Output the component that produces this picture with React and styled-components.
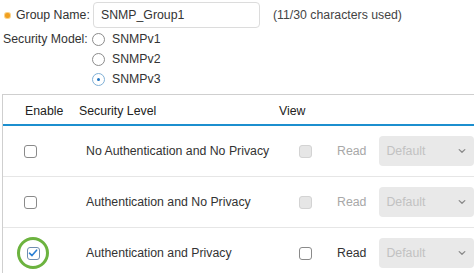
import styled, { createGlobalStyle } from "styled-components";

const GlobalStyle = createGlobalStyle`
  html, body {
    margin: 0;
    padding: 0;
    background: #fff;
    overflow: hidden;
  }
  body {
    font-family: "Liberation Sans", Arial, sans-serif;
    font-size: 12.3px;
    color: #333;
  }
`;

const rows = [
  { level: "No Authentication and No Privacy", enabled: false, viewEnabled: false },
  { level: "Authentication and No Privacy", enabled: false, viewEnabled: false },
  { level: "Authentication and Privacy", enabled: true, viewEnabled: true },
];

function CheckMark() {
  return (
    <svg width="10" height="10" viewBox="0 0 10 10">
      <path d="M1.5 5.2 L4 7.6 L8.6 2.2" fill="none" stroke="#2a7fd4" strokeWidth="1.6" strokeLinecap="round" strokeLinejoin="round" />
    </svg>
  );
}

function Chevron() {
  return (
    <svg width="8" height="6" viewBox="0 0 8 6">
      <path d="M1.2 1.6 L4 4.3 L6.8 1.6" fill="none" stroke="#8a8a8a" strokeWidth="1.3" strokeLinecap="round" strokeLinejoin="round" />
    </svg>
  );
}

export default function App() {
  return (
    <Page>
      <GlobalStyle />
      <FormRow>
        <Label>
          <Required />
          Group Name:
        </Label>
        <TextInput defaultValue="SNMP_Group1" />
        <Hint>(11/30 characters used)</Hint>
      </FormRow>
      <ModelRow>
        <Label>Security Model:</Label>
        <RadioList>
          {["SNMPv1", "SNMPv2", "SNMPv3"].map((m) => (
            <RadioItem key={m}>
              <Radio $checked={m === "SNMPv3"} />
              {m}
            </RadioItem>
          ))}
        </RadioList>
      </ModelRow>

      <Table>
        <HeaderRow>
          <HeadCell $pad={22}>Enable</HeadCell>
          <HeadCell>Security Level</HeadCell>
          <HeadCell>View</HeadCell>
        </HeaderRow>
        {rows.map((r) => (
          <Row key={r.level}>
            <EnableCell>
              {r.enabled ? (
                <Highlight>
                  <Box $checked>
                    <CheckMark />
                  </Box>
                </Highlight>
              ) : (
                <Box />
              )}
            </EnableCell>
            <LevelCell>{r.level}</LevelCell>
            <ViewCell>
              <Box $disabled={!r.viewEnabled} />
              <ReadLabel $disabled={!r.viewEnabled}>Read</ReadLabel>
              <Select>
                Default
                <Chevron />
              </Select>
            </ViewCell>
          </Row>
        ))}
      </Table>
    </Page>
  );
}

const Page = styled.div`
  width: 474px;
  padding-top: 2px;
`;

const FormRow = styled.div`
  display: flex;
  align-items: center;
  height: 26px;
`;

const Label = styled.div`
  width: 90px;
  padding-left: 3px;
  box-sizing: border-box;
  display: flex;
  align-items: center;
  white-space: nowrap;
  color: #333;
`;

const Required = styled.span`
  width: 5px;
  height: 5px;
  border-radius: 2px;
  background: #f0a020;
  box-shadow: 0 0 0 1px #fbd38a;
  margin: 0 6px 0 2px;
`;

const TextInput = styled.input`
  width: 167px;
  height: 26px;
  box-sizing: border-box;
  border: 1px solid #dcdcdc;
  border-radius: 4px;
  padding: 0 7px;
  margin-left: 3px;
  font: inherit;
  color: #333;
  outline: none;
`;

const Hint = styled.span`
  margin-left: 13px;
  color: #444;
`;

const ModelRow = styled.div`
  display: flex;
  align-items: flex-start;
  margin-top: 1px;
  & > ${Label} {
    height: 20px;
  }
`;

const RadioList = styled.div`
  display: flex;
  flex-direction: column;
  margin-left: 2px;
`;

const RadioItem = styled.div`
  display: flex;
  align-items: center;
  height: 20px;
  gap: 7px;
`;

const Radio = styled.span`
  width: 13px;
  height: 13px;
  box-sizing: border-box;
  border-radius: 50%;
  border: 1px solid ${(p) => (p.$checked ? "#7fb0d6" : "#8c8c8c")};
  display: flex;
  align-items: center;
  justify-content: center;
  &::after {
    content: "";
    width: 3px;
    height: 3px;
    border-radius: 50%;
    background: #1f73c0;
    display: ${(p) => (p.$checked ? "block" : "none")};
  }
`;

const Table = styled.div`
  margin-top: 5px;
  margin-left: 2px;
  width: 480px;
  border-top: 1px solid #cfcfcf;
  border-left: 1px solid #cfcfcf;
`;

const columns = "76px 200px 1fr";

const HeaderRow = styled.div`
  display: grid;
  grid-template-columns: ${columns};
  padding: 9px 0 5px;
  border-bottom: 2px solid #1c8fcf;
  line-height: 15px;
  color: #222;
`;

const HeadCell = styled.div`
  padding-left: ${(p) => p.$pad || 0}px;
`;

const Row = styled.div`
  display: grid;
  grid-template-columns: ${columns};
  align-items: center;
  height: 50px;
  border-bottom: 1px solid #e6e6e6;
`;

const EnableCell = styled.div`
  padding-left: 21px;
  display: flex;
  align-items: center;
`;

const Highlight = styled.div`
  width: 26px;
  height: 26px;
  margin-left: -7px;
  border: 3px solid #6cb33f;
  border-radius: 50%;
  display: flex;
  align-items: center;
  justify-content: center;
`;

const Box = styled.span`
  width: 13px;
  height: 13px;
  box-sizing: border-box;
  border-radius: 3px;
  border: 1px solid ${(p) => (p.$disabled ? "#d3d3d3" : p.$checked ? "#6f8db0" : "#8a8a8a")};
  background: ${(p) => (p.$disabled ? "#e6e6e6" : "#fff")};
  display: flex;
  align-items: center;
  justify-content: center;
  flex-shrink: 0;
`;

const LevelCell = styled.div`
  padding-left: 7px;
  white-space: nowrap;
  color: #333;
`;

const ViewCell = styled.div`
  display: flex;
  align-items: center;
  padding-left: 20px;
`;

const ReadLabel = styled.span`
  margin-left: 25px;
  color: ${(p) => (p.$disabled ? "#a8a8a8" : "#333")};
`;

const Select = styled.div`
  margin-left: 13px;
  width: 95px;
  height: 30px;
  box-sizing: border-box;
  border-radius: 4px;
  background: #e9e9e9;
  color: #c2c2c2;
  padding: 0 8px 0 7px;
  display: flex;
  align-items: center;
  justify-content: space-between;
`;
